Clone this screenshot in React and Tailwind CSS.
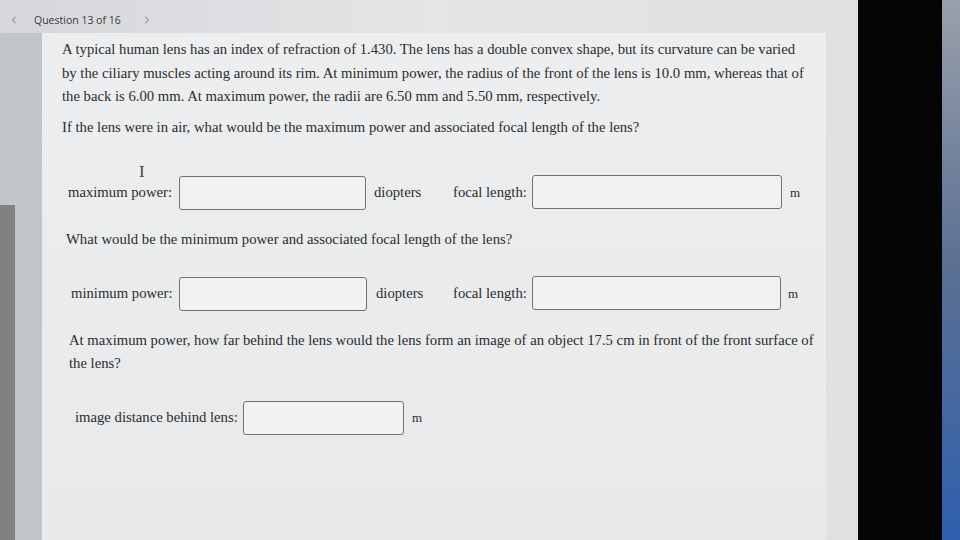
import React from 'react';
import { ChevronLeft, ChevronRight } from 'lucide-react';

const serif = { fontFamily: '"Liberation Serif", "Times New Roman", serif' };

const Box = ({ className }) => (
  <div className={`h-[34px] rounded-[3px] border border-[#6f7275] bg-[#f1f3f3] ${className}`} />
);

const App = () => {
  return (
    <div className="flex h-[540px] w-[960px] overflow-hidden bg-[#d9dbde]">
      {/* screen */}
      <div className="relative flex w-[858px] flex-col bg-gradient-to-r from-[#d5d7da] via-[#e4e5e7] to-[#dfe0e2]">
        {/* header */}
        <div
          className="flex h-[33px] items-end pb-[6px] pl-[8px] text-[10.5px] leading-[14px] text-[#3a3a3a]"
          style={{ fontFamily: '"Open Sans", "Noto Sans", sans-serif' }}
        >
          <ChevronLeft size={12} strokeWidth={1.5} className="mb-[1px] text-[#555]" />
          <span className="ml-[14px]">Question 13 of 16</span>
          <ChevronRight size={12} strokeWidth={1.5} className="mb-[1px] ml-[20px] text-[#555]" />
        </div>

        <div className="flex flex-1">
          {/* left sidebar strip */}
          <div className="flex w-[42px] flex-col bg-[#c3c6c9]">
            <div className="h-[172px]" />
            <div className="w-[15px] flex-1 bg-[#7f8281]" />
          </div>

          {/* question panel */}
          <div
            className="relative w-[784px] bg-gradient-to-b from-[#eceeef] to-[#e7e9ea] pl-[20px] pt-[5px] text-[14.7px] leading-[23.5px] text-[#2c2c2c]"
            style={serif}
          >
            <div>
              <div>A typical human lens has an index of refraction of 1.430. The lens has a double convex shape, but its curvature can be varied</div>
              <div>by the ciliary muscles acting around its rim. At minimum power, the radius of the front of the lens is 10.0 mm, whereas that of</div>
              <div>the back is 6.00 mm. At maximum power, the radii are 6.50 mm and 5.50 mm, respectively.</div>
            </div>
            <div className="mt-[7px]">
              If the lens were in air, what would be the maximum power and associated focal length of the lens?
            </div>

            {/* mouse cursor */}
            <div className="absolute left-[97px] top-[131px] text-[17px] leading-[16px] font-light text-[#444]">I</div>

            {/* row 1 */}
            <div className="mt-[37px] flex items-center">
              <span className="ml-[6px] w-[111px]">maximum power:</span>
              <Box className="w-[187px]" />
              <span className="ml-[8px] w-[79px]">diopters</span>
              <span className="w-[79px]">focal length:</span>
              <Box className="-mt-[3px] w-[250px]" />
              <span className="ml-[8px] text-[13px]">m</span>
            </div>

            <div className="ml-[4px] mt-[18px]">What would be the minimum power and associated focal length of the lens?</div>

            {/* row 2 */}
            <div className="mt-[25px] flex items-center">
              <span className="ml-[9px] w-[108px]">minimum power:</span>
              <Box className="w-[188px]" />
              <span className="ml-[9px] w-[77px]">diopters</span>
              <span className="w-[79px]">focal length:</span>
              <Box className="-mt-[2px] w-[249px]" />
              <span className="ml-[7px] text-[13px]">m</span>
            </div>

            <div className="ml-[7px] mt-[18px]">
              <div>At maximum power, how far behind the lens would the lens form an image of an object 17.5 cm in front of the front surface of</div>
              <div>the lens?</div>
            </div>

            {/* row 3 */}
            <div className="mt-[25px] flex items-center">
              <span className="ml-[13px] w-[168px]">image distance behind lens:</span>
              <Box className="w-[161px]" />
              <span className="ml-[8px] text-[13px]">m</span>
            </div>
          </div>
        </div>
      </div>

      {/* monitor bezel */}
      <div className="w-[84px] bg-[#050505]" />
      {/* background behind monitor */}
      <div className="flex-1 bg-gradient-to-b from-[#9aa0aa] via-[#5a6f92] to-[#2e5fae]" />
    </div>
  );
};

export default App;
